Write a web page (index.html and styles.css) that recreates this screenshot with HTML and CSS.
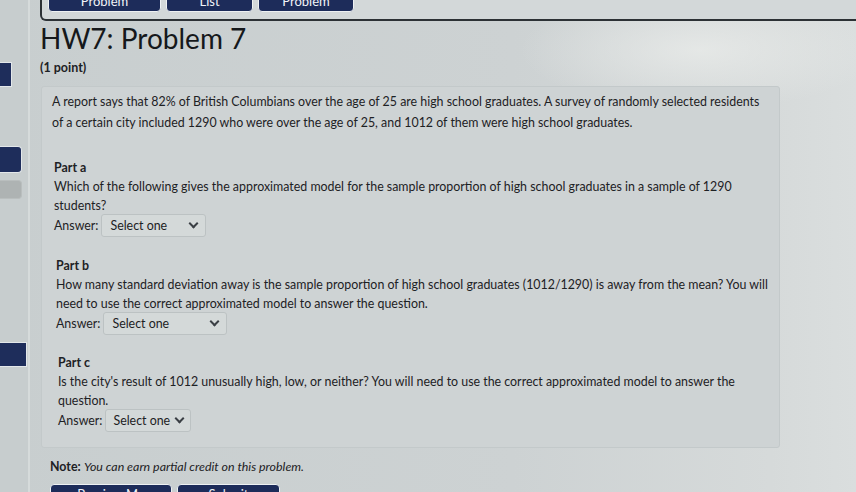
FILE: index.html
```html
<!DOCTYPE html>
<html>
<head>
    <meta charset="UTF-8">
    <link rel="stylesheet" href="styles.css">
</head>
<body>
    <div class="layout">
        <div class="sidebar">
            <div class="side-item side-1"></div>
            <div class="side-item side-2"></div>
            <div class="side-item side-3"></div>
            <div class="side-item side-4"></div>
        </div>

        <div class="main">
            <div class="nav">
                <button class="nav-btn btn-prev">Previous Problem</button>
                <button class="nav-btn btn-list">Problem List</button>
                <button class="nav-btn btn-next">Next Problem</button>
            </div>

            <h1 class="title">HW7: Problem 7</h1>
            <div class="points">(1 point)</div>

            <div class="problem">
                <p class="intro">A report says that 82% of British Columbians over the age of 25 are high school graduates. A survey of randomly selected residents of a certain city included 1290 who were over the age of 25, and 1012 of them were high school graduates.</p>

                <div class="part part-a">
                    <div class="part-title">Part a</div>
                    <div class="part-text">Which of the following gives the approximated model for the sample proportion of high school graduates in a sample of 1290 students?</div>
                    <div class="answer">
                        <span>Answer:</span>
                        <div class="select sel-a">Select one <span class="chev"></span></div>
                    </div>
                </div>

                <div class="part part-b">
                    <div class="part-title">Part b</div>
                    <div class="part-text">How many standard deviation away is the sample proportion of high school graduates (1012/1290) is away from the mean? You will need to use the correct approximated model to answer the question.</div>
                    <div class="answer">
                        <span>Answer:</span>
                        <div class="select sel-b">Select one <span class="chev"></span></div>
                    </div>
                </div>

                <div class="part part-c">
                    <div class="part-title">Part c</div>
                    <div class="part-text">Is the city's result of 1012 unusually high, low, or neither? You will need to use the correct approximated model to answer the question.</div>
                    <div class="answer">
                        <span>Answer:</span>
                        <div class="select sel-c">Select one <span class="chev"></span></div>
                    </div>
                </div>
            </div>

            <div class="note"><b>Note:</b> <i>You can earn partial credit on this problem.</i></div>

            <div class="actions">
                <button class="act-btn act-1">Preview My Answers</button>
                <button class="act-btn act-2">Submit Answers</button>
            </div>
        </div>
    </div>
</body>
</html>
```

FILE: styles.css
```css
body {
    margin: 0;
    height: 492px;
    overflow: hidden;
    background:
        radial-gradient(ellipse 180px 60px at 700px 50px, rgba(236, 238, 236, 0.7), rgba(236, 238, 236, 0)),
        linear-gradient(90deg, #c8cecf 0%, #cdd2d3 60%, #d6dada 90%, #dadede 100%);
    font-family: Lato, "Liberation Sans", sans-serif;
    color: #1d2124;
}

.layout {
    display: flex;
}

/* левая панель */
.sidebar {
    width: 28px;
    flex-shrink: 0;
    height: 492px;
    border-right: 2px solid #d6dbdb;
    background: #c7cdce;
    position: relative;
}

.side-item {
    position: absolute;
    left: 0;
    background: #1e2d5b;
    border: 1px solid #e3e7ea;
    border-left: none;
    border-radius: 0 4px 4px 0;
}

.side-1 { top: 62px; width: 11px; height: 23px; border-radius: 0; }
.side-2 { top: 146px; width: 21px; height: 25px; }
.side-3 { top: 180px; width: 21px; height: 17px; background: #aeb3b3; border-color: #b9bebe; }
.side-4 { top: 342px; width: 26px; height: 23px; border-radius: 0; }

.main {
    flex: 1;
    padding-left: 10px;
}

/* верхние кнопки */
.nav {
    display: flex;
    gap: 5px;
    height: 19px;
    margin-right: -20px;
    padding-left: 6px;
    border: 2px solid #2c3135;
    border-top: none;
    border-radius: 0 0 0 6px;
    background: #d3d8d9;
    overflow: hidden;
}

.nav-btn {
    margin-top: -22px;
    height: 34px;
    padding: 0 10px;
    border: 1px solid #eef1f3;
    border-radius: 4px;
    background: #1d2c5a;
    color: #f2f4f8;
    font-family: Lato, sans-serif;
    font-size: 13px;
    line-height: 12px;
}

.btn-prev { width: 113px; }
.btn-list { width: 87px; }
.btn-next { width: 96px; }

.title {
    margin: 0;
    font-size: 28px;
    font-weight: 400;
    line-height: 34px;
    color: #15181b;
}

.points {
    margin-top: 5px;
    font-size: 12.5px;
    font-weight: 700;
    line-height: 16px;
}

.problem {
    margin: 10px 76px 0 1px;
    padding: 4px 10px 15px 10px;
    background: #ced3d4;
    border: 1px solid #c3c9ca;
    border-radius: 3px;
    font-size: 12.4px;
}

.intro {
    margin: 0;
    line-height: 21px;
}

.part {
    margin-top: 27px;
    padding-left: 2px;
}

.part-b { margin-top: 21px; padding-left: 4px; }
.part-c { margin-top: 20px; padding-left: 6px; }

.part-title {
    font-weight: 700;
    line-height: 16px;
}

.part-text {
    line-height: 19px;
    margin-top: 1px;
}

.answer {
    display: flex;
    align-items: center;
    gap: 3px;
    margin-top: -1px;
}

.select {
    display: flex;
    align-items: center;
    justify-content: space-between;
    box-sizing: border-box;
    height: 23px;
    padding: 0 8px;
    background: #d4d9d9;
    border: 1px solid #bcc2c3;
    border-radius: 3px;
}

.sel-a { width: 105px; }
.sel-b { width: 124px; }
.sel-c { width: 86px; padding: 0 7px; }

.chev {
    width: 5px;
    height: 5px;
    border-right: 2px solid #3a3f44;
    border-bottom: 2px solid #3a3f44;
    transform: rotate(45deg);
    margin-top: -4px;
}

.note {
    margin: 11px 0 0 10px;
    font-size: 12.4px;
}

.actions {
    display: flex;
    gap: 5px;
    margin: 10px 0 0 10px;
}

.act-btn {
    width: 122px;
    height: 26px;
    border: 1px solid #eef1f3;
    border-radius: 4px;
    background: #1d2c5a;
    color: #f2f4f8;
    font-family: Lato, sans-serif;
    font-size: 13px;
}

.act-2 { width: 103px; }
```
